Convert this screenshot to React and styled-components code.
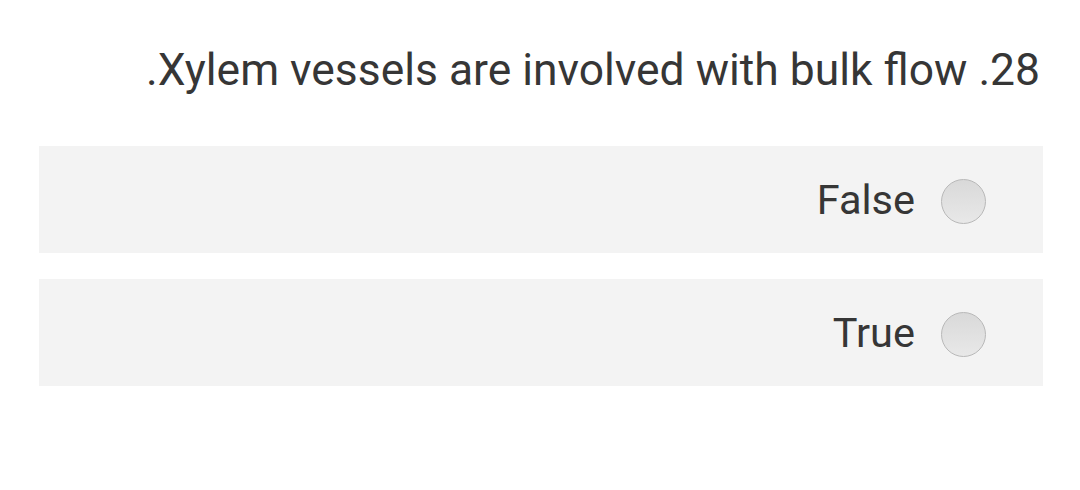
import React from "react";
import styled, { createGlobalStyle } from "styled-components";

const Global = createGlobalStyle`
  html, body { margin: 0; padding: 0; background: #ffffff; }
  body { font-family: Roboto, "Noto Sans", sans-serif; color: #333333; }
`;

const Page = styled.div`
  width: 1080px;
  box-sizing: border-box;
  padding: 40px 37px 0 39px;
  direction: rtl;
`;

const Question = styled.div`
  font-size: 44.4px;
  line-height: 60px;
  color: #363636;
  padding-right: 3px;
  margin-bottom: 46px;
`;

const Options = styled.div`
  display: flex;
  flex-direction: column;
  gap: 26px;
`;

const Option = styled.label`
  display: flex;
  align-items: center;
  gap: 26px;
  height: 107px;
  background: #f3f3f3;
  padding-right: 57px;
  font-size: 41.5px;
  color: #363636;
`;

const Radio = styled.span`
  width: 43px;
  height: 43px;
  border-radius: 50%;
  border: 1.5px solid #b8b8b8;
  background: linear-gradient(#d9d9d9, #e8e8e8);
  flex: none;
  margin-top: 4px;
`;

const Label = styled.span`
  line-height: 1;
`;

export default function App() {
  return (
    <>
      <Global />
      <Page>
        <Question>28. Xylem vessels are involved with bulk flow.</Question>
        <Options>
          <Option>
            <Radio />
            <Label>False</Label>
          </Option>
          <Option>
            <Radio />
            <Label>True</Label>
          </Option>
        </Options>
      </Page>
    </>
  );
}
